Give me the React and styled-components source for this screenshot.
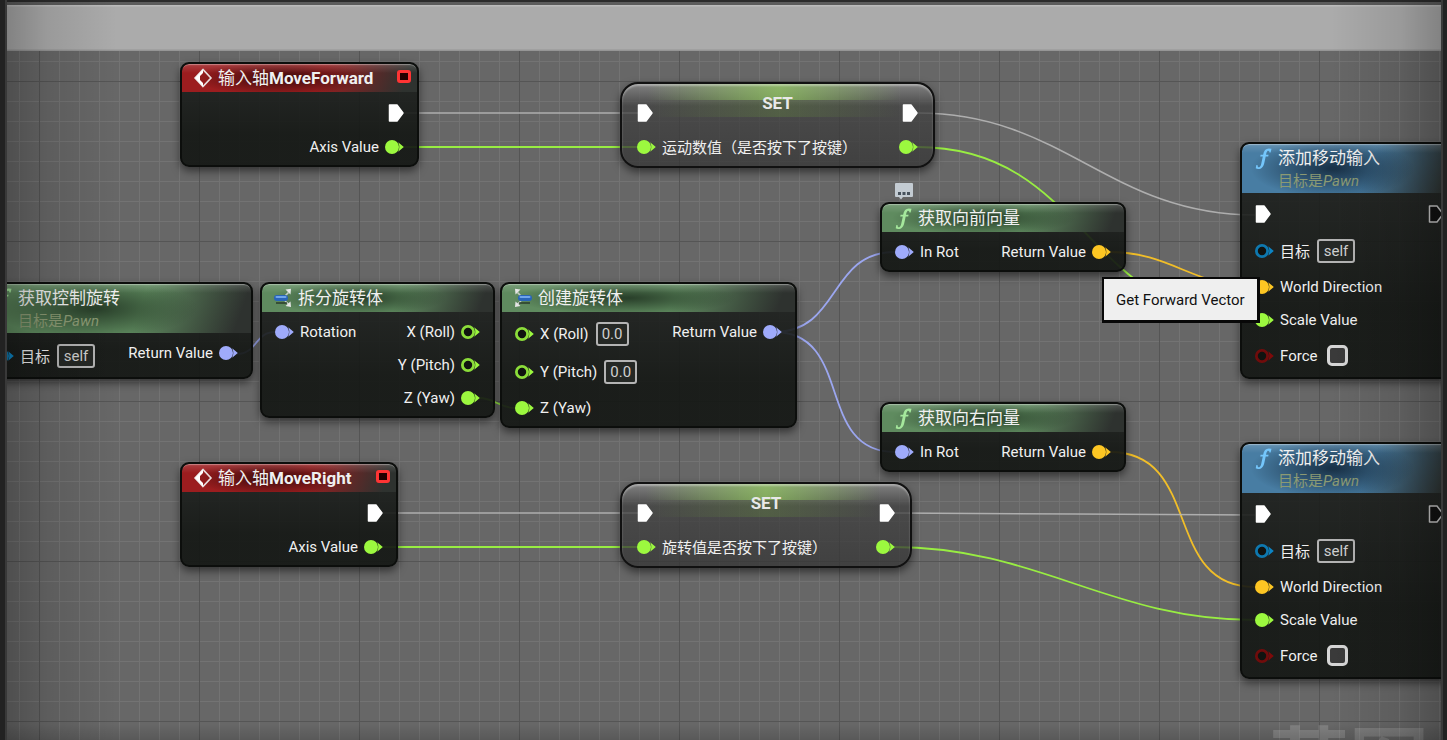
import React from 'react'
import styled, { createGlobalStyle } from 'styled-components'

const GlobalStyle = createGlobalStyle`
    * {
        box-sizing: border-box;
    }

    body {
        margin: 0;
        background: #222;
        font-family: Roboto, "Noto Sans CJK SC", sans-serif;
        font-size: 15px;
        color: #f0f0f0;
    }
`

const colors = {
    exec: '#ffffff',
    float: '#9cf83f',
    rotator: '#9fabfb',
    vector: '#fdc623',
    object: '#0d85c4',
    bool: '#7d0a0a',
}

const headers = {
    red: ['#9c1d1f', '#3d0c0c'],
    green: ['#5f8b5f', '#2a412b'],
    blue: ['#487da3', '#1a3349'],
}

const Editor = styled.main`
    height: 100vh;
    overflow: hidden;
    padding: 0 6px 0 7px;
    background: linear-gradient(to right, #222 5px, #393939 5px, #393939 calc(100% - 4px), #222 calc(100% - 4px));
`

const Graph = styled.div`
    position: relative;
    height: 100%;
    overflow: hidden;
    background-color: #676767;
    background-image:
        linear-gradient(to right, #555 1px, transparent 1px),
        linear-gradient(to bottom, #555 1px, transparent 1px),
        linear-gradient(to right, #737373 1px, transparent 1px),
        linear-gradient(to bottom, #737373 1px, transparent 1px);
    background-size: 160px 160px, 160px 160px, 20px 20px, 20px 20px;
    background-position: 32px 0, 0 81px, 12px 0, 0 1px;
`

const CommentBar = styled.div`
    height: 51px;
    border-top: 2px solid #2b2b2b;
    background: linear-gradient(to bottom, #5c5c5c 3px, #bbb 3px, #bbb 4px, #ababab 5px, #ababab 47px, #959595 48px);
`

const Vignette = styled.div`
    position: absolute;
    inset: 0;
    pointer-events: none;
    background:
        linear-gradient(to right, rgba(0, 0, 0, 0.24), rgba(0, 0, 0, 0.1) 40px, transparent 110px),
        linear-gradient(to left, rgba(0, 0, 0, 0.24), rgba(0, 0, 0, 0.1) 40px, transparent 110px),
        linear-gradient(to top, rgba(0, 0, 0, 0.14), transparent 16px);
`

const Wires = styled.svg`
    position: absolute;
    top: 0;
    left: 0;
    width: 100%;
    height: 100%;
    fill: none;
`

const Node = styled.section`
    position: absolute;
    left: ${props => props.$x}px;
    top: ${props => props.$y}px;
    width: ${props => props.$width}px;
    border: 2px solid #0c0e0c;
    border-radius: 9px;
    overflow: hidden;
    background: linear-gradient(to bottom, rgba(30, 33, 31, 0.88), rgba(20, 23, 20, 0.92) 70%);
    box-shadow: 0 4px 8px rgba(0, 0, 0, 0.5);
`

const Header = styled.header`
    display: flex;
    gap: 6px;
    height: ${props => (props.$tall ? 49 : 28)}px;
    padding: 0 6px 0 12px;
    border-radius: 7px 7px 0 0;
    box-shadow: inset 0 2px 1px -1px rgba(255, 255, 255, 0.35);
    background:
        linear-gradient(to bottom, rgba(255, 255, 255, 0.16), transparent 9px),
        radial-gradient(ellipse 38% 60% at 42% 50%, ${props => headers[props.$tone][1]} 5%, transparent),
        linear-gradient(110deg, transparent 58%, #2e322f 94%),
        ${props => headers[props.$tone][0]};

    svg {
        flex: none;
        margin-top: 4px;
    }
`

const Heading = styled.div`
    flex: 1;
    white-space: nowrap;
    padding-top: 3px;

    h2 {
        margin: 0;
        font-size: 17px;
        line-height: 22px;
        font-weight: 400;
    }

    p {
        margin: 0;
        line-height: 24px;
        color: #8b9a74;
    }
`

const Delegate = styled.button`
    width: 14px;
    height: 13px;
    margin-top: 6px;
    padding: 0;
    border: 3px solid #ff3434;
    border-radius: 3px;
    background: #230000;
`

const Body = styled.div`
    display: flex;
    justify-content: space-between;
    padding: 3px 13px 2px;
`

const Side = styled.div`
    display: flex;
    flex-direction: column;
    align-items: ${props => (props.$out ? 'flex-end' : 'flex-start')};
`

const PinRow = styled.label`
    display: flex;
    align-items: center;
    gap: 6px;
    height: ${props => props.$height || 33}px;
    white-space: nowrap;
`

const ValueBox = styled.input`
    width: ${props => props.$width}px;
    height: 24px;
    margin: 0 0 0 1px;
    padding: 0;
    border: 2px solid #b4b4b4;
    border-radius: 3px;
    background: #252825;
    color: #d0d0d0;
    font: inherit;
    text-align: center;
`

const CheckBox = styled.input`
    appearance: none;
    width: 21px;
    height: 21px;
    margin: 0 0 0 4px;
    border: 3px solid #d6d6d6;
    border-radius: 5px;
    background: #3a3a3a;
`

const SetNode = styled(Node)`
    border-color: #111;
    border-radius: 18px;
    padding: 0 15px 3px;
    background:
        linear-gradient(to right, transparent 8%, rgba(148, 205, 95, 0.7) 50%, transparent 90%) 0 0 / 100% 16px no-repeat,
        linear-gradient(to right, transparent 8%, rgba(110, 160, 60, 0.25) 50%, transparent 90%) 0 16px / 100% 17px no-repeat,
        linear-gradient(to bottom, rgba(135, 135, 135, 0.8), rgba(62, 62, 62, 0.72) 22px, rgba(52, 52, 52, 0.75));
    box-shadow: inset 0 2px 2px rgba(255, 255, 255, 0.35), 0 4px 8px rgba(0, 0, 0, 0.5);
`

const SetRow = styled.div`
    display: flex;
    justify-content: space-between;
    height: ${props => props.$height}px;

    h2 {
        margin: 7px 0 0;
        font-size: 17px;
        line-height: 24px;
        font-weight: 700;
        color: #e8e8e8;
    }
`

const ExecSlot = styled.span`
    display: flex;
    align-items: flex-end;
    padding-bottom: 8px;
`

const Bubble = styled.svg`
    position: absolute;
    left: 887px;
    top: 182px;
`

const Tooltip = styled.div`
    position: absolute;
    left: 1095px;
    top: 277px;
    padding: 11px 12px 9px;
    border: 2px solid #080808;
    border-right-width: 3px;
    border-bottom-width: 3px;
    background: #efefef;
    color: #111;
    line-height: 21px;
    white-space: nowrap;
`

const Watermark = styled.div`
    position: absolute;
    right: 12px;
    bottom: -66px;
    font-size: 80px;
    line-height: 80px;
    font-weight: 700;
    color: rgba(255, 255, 255, 0.17);
`

function ExecPin({ empty }) {
    return (
        <svg width="16" height="18" viewBox="0 0 16 18">
            <path
                d="M1.5 1H9L15 9L9 17H1.5Z"
                fill={empty ? '#111' : '#fff'}
                stroke={empty ? '#c8c8c8' : '#fff'}
                strokeWidth="1.5"
                strokeLinejoin="round"
            />
        </svg>
    )
}

function DataPin({ type, empty }) {
    return (
        <svg width="19" height="14" viewBox="0 0 19 14">
            <path d="M13.2 2.2L18.8 7L13.2 11.8Q15.4 7 13.2 2.2Z" fill={colors[type]} />
            <circle
                cx="7"
                cy="7"
                r={empty ? 5.6 : 7}
                fill={empty ? '#101310' : colors[type]}
                stroke={empty ? colors[type] : 'none'}
                strokeWidth="2.8"
                strokeOpacity="0.88"
            />
        </svg>
    )
}

function EventIcon() {
    return (
        <svg width="18" height="20" viewBox="0 0 18 20">
            <path d="M9 1.5L17 10L9 18.5L1 10Z" fill="none" stroke="#e8dcdc" strokeWidth="1.8" strokeLinejoin="round" />
            <path d="M9 1.5L1 10L9 18.5V15L6 12V8L9 5Z" fill="#fff" />
        </svg>
    )
}

function FunctionIcon({ color }) {
    return (
        <svg width="18" height="22" viewBox="0 0 18 22" fill={color}>
            <path d="M17.5 .8L16.6 4.6H15.5C15.4 3 14.5 2.3 13.7 2.8C12.8 3.4 12.4 5 12 6.8H14.6L14.2 8.4H11.7L10.3 15C9.3 19.2 7.3 21 4.3 21C3.3 21 2.4 20.7 1.7 20.3L2.4 17H3.5C3.5 18.7 4.2 19.5 5.1 19.3C6.3 19 6.9 17.5 7.4 15L8.8 8.4H6.2L6.6 6.8H9.1C9.9 2.8 11.7 .6 14.8 .6Z" />
        </svg>
    )
}

function StructIcon({ make }) {
    return (
        <svg width="18" height="20" viewBox="0 0 18 20">
            <g transform={make ? 'translate(18 0) scale(-1 1)' : undefined}>
                <path d="M11 8L14.5 4.5M11 13L14.5 16" stroke="#c4ccc4" strokeWidth="1.6" />
                <path d="M11.5 1.5L17 .8L16.5 6.5Z M11.5 18L17 19L16.5 13.5Z" fill="#e6e6e6" />
                <path d="M2 15H13" stroke="#1d2a1d" strokeWidth="2" strokeOpacity="0.6" />
                <rect x="0" y="7" width="14" height="6" rx="3" fill="#2864b8" />
                <rect x="1.5" y="8" width="11" height="2" rx="1" fill="#6fa5ea" />
            </g>
        </svg>
    )
}

function Pin({ type, label, out, empty, value, check, height }) {
    const pin = type === 'exec' ? <ExecPin empty={empty} /> : <DataPin type={type} empty={empty} />
    const rowHeight = height || (type === 'exec' ? 35 : value || check ? 39 : 33)

    return (
        <PinRow as={value || check ? 'label' : 'div'} $height={rowHeight}>
            {!out && pin}
            {label && <span>{label}</span>}
            {value && <ValueBox $width={value === 'self' ? 38 : 33} defaultValue={value} />}
            {check && <CheckBox type="checkbox" />}
            {out && pin}
        </PinRow>
    )
}

const icons = {
    event: <EventIcon />,
    func: <FunctionIcon color="#a5e89c" />,
    call: <FunctionIcon color="#74c6fb" />,
    breakStruct: <StructIcon />,
    makeStruct: <StructIcon make />,
}

function GraphNode({ x, y, width, tone, icon, title, subtitle, delegate, inputs = [], outputs = [] }) {
    return (
        <Node $x={x} $y={y} $width={width}>
            <Header $tone={tone} $tall={!!subtitle}>
                {icons[icon]}
                <Heading>
                    <h2>{title}</h2>
                    {subtitle && <p>目标是<i>{subtitle}</i></p>}
                </Heading>
                {delegate && <Delegate aria-label="Delegate" />}
            </Header>
            <Body>
                <Side>{inputs.map((pin, index) => <Pin key={index} {...pin} />)}</Side>
                <Side $out>{outputs.map((pin, index) => <Pin key={index} out {...pin} />)}</Side>
            </Body>
        </Node>
    )
}

function VariableSet({ x, y, width, label }) {
    return (
        <SetNode $x={x} $y={y} $width={width}>
            <SetRow $height={46}>
                <ExecSlot><ExecPin /></ExecSlot>
                <h2>SET</h2>
                <ExecSlot><ExecPin /></ExecSlot>
            </SetRow>
            <SetRow $height={33}>
                <Pin type="float" label={label} />
                <Pin type="float" out />
            </SetRow>
        </SetNode>
    )
}

const moveInputs = [
    { type: 'exec' },
    { type: 'object', label: '目标', empty: true, value: 'self' },
    { type: 'vector', label: 'World Direction' },
    { type: 'float', label: 'Scale Value' },
    { type: 'bool', label: 'Force', empty: true, check: true },
]

const axisOutputs = [
    { type: 'exec' },
    { type: 'float', label: 'Axis Value' },
]

const nodes = [
    {
        x: 173, y: 62, width: 239, tone: 'red', icon: 'event', delegate: true,
        title: <>输入轴<b>MoveForward</b></>, outputs: axisOutputs,
    },
    {
        x: 173, y: 462, width: 218, tone: 'red', icon: 'event', delegate: true,
        title: <>输入轴<b>MoveRight</b></>, outputs: axisOutputs,
    },
    {
        x: -27, y: 282, width: 273, tone: 'green', icon: 'func', title: '获取控制旋转', subtitle: 'Pawn',
        inputs: [{ type: 'object', label: '目标', empty: true, value: 'self' }],
        outputs: [{ type: 'rotator', label: 'Return Value' }],
    },
    {
        x: 253, y: 282, width: 235, tone: 'green', icon: 'breakStruct', title: '拆分旋转体',
        inputs: [{ type: 'rotator', label: 'Rotation' }],
        outputs: [
            { type: 'float', label: 'X (Roll)', empty: true },
            { type: 'float', label: 'Y (Pitch)', empty: true },
            { type: 'float', label: 'Z (Yaw)' },
        ],
    },
    {
        x: 493, y: 282, width: 297, tone: 'green', icon: 'makeStruct', title: '创建旋转体',
        inputs: [
            { type: 'float', label: 'X (Roll)', empty: true, value: '0.0', height: 38 },
            { type: 'float', label: 'Y (Pitch)', empty: true, value: '0.0', height: 38 },
            { type: 'float', label: 'Z (Yaw)' },
        ],
        outputs: [{ type: 'rotator', label: 'Return Value' }],
    },
    {
        x: 873, y: 202, width: 246, tone: 'green', icon: 'func', title: '获取向前向量',
        inputs: [{ type: 'rotator', label: 'In Rot' }],
        outputs: [{ type: 'vector', label: 'Return Value' }],
    },
    {
        x: 873, y: 402, width: 246, tone: 'green', icon: 'func', title: '获取向右向量',
        inputs: [{ type: 'rotator', label: 'In Rot' }],
        outputs: [{ type: 'vector', label: 'Return Value' }],
    },
    {
        x: 1233, y: 142, width: 219, tone: 'blue', icon: 'call', title: '添加移动输入', subtitle: 'Pawn',
        inputs: moveInputs, outputs: [{ type: 'exec', empty: true }],
    },
    {
        x: 1233, y: 442, width: 219, tone: 'blue', icon: 'call', title: '添加移动输入', subtitle: 'Pawn',
        inputs: moveInputs, outputs: [{ type: 'exec', empty: true }],
    },
]

const wires = [
    ['exec', 397, 113, 631, 113],
    ['float', 396, 147, 631, 147],
    ['exec', 911, 113, 1248, 215],
    ['float', 910, 147, 1248, 320],
    ['rotator', 230, 354, 268, 332],
    ['float', 472, 398, 508, 408],
    ['rotator', 767, 332, 888, 252],
    ['rotator', 767, 332, 888, 452],
    ['vector', 1103, 252, 1248, 287],
    ['vector', 1103, 452, 1248, 587],
    ['exec', 376, 513, 631, 513],
    ['float', 375, 547, 631, 547],
    ['exec', 887, 513, 1248, 515],
    ['float', 886, 547, 1248, 620],
]

function wirePath(x1, y1, x2, y2) {
    const tangent = (Math.abs(x2 - x1) + Math.abs(y2 - y1)) / 3
    return `M${x1} ${y1}C${x1 + tangent} ${y1} ${x2 - tangent} ${y2} ${x2} ${y2}`
}

function App() {
    return (
        <Editor>
            <GlobalStyle />
            <Graph>
                <CommentBar />
                <Wires>
                    {wires.map(([type, ...points], index) => (
                        <path
                            key={index}
                            d={wirePath(...points)}
                            stroke={type === 'exec' ? '#b4b4b4' : colors[type]}
                            strokeWidth={type === 'exec' ? 1.5 : 1.8}
                            strokeOpacity="0.92"
                        />
                    ))}
                </Wires>
                {nodes.map((node, index) => <GraphNode key={index} {...node} />)}
                <VariableSet x={613} y={82} width={315} label="运动数值（是否按下了按键）" />
                <VariableSet x={613} y={482} width={292} label="旋转值是否按下了按键）" />
                <Bubble width="20" height="18" viewBox="0 0 20 18">
                    <path d="M2 1H18Q19 1 19 2V14Q19 15 18 15H9L7 17.5L5 15H2Q1 15 1 14V2Q1 1 2 1Z" fill="#c3cbd2" />
                    <path d="M4 10H7V13H4ZM8.5 10H11.5V13H8.5ZM13 10H16V13H13Z" fill="#47525c" />
                </Bubble>
                <Watermark>蓝图</Watermark>
                <Vignette />
                <Tooltip role="tooltip">Get Forward Vector</Tooltip>
            </Graph>
        </Editor>
    )
}

export default App
